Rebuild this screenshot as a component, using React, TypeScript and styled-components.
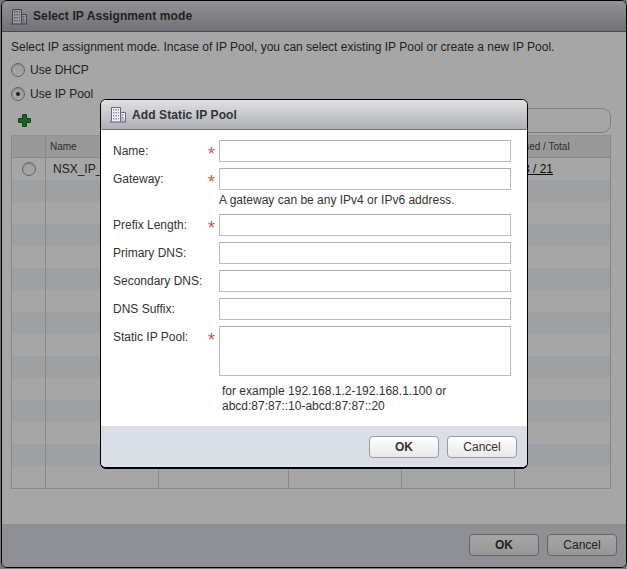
import React from 'react';
import styled, { createGlobalStyle } from 'styled-components';

const GlobalStyle = createGlobalStyle`
  html, body {
    margin: 0;
    padding: 0;
    background: #b9b9b9;
  }
  body {
    font-family: "Liberation Sans", Arial, sans-serif;
    font-size: 12px;
    color: #333;
  }
`;

const Page = styled.div`
  position: relative;
  width: 627px;
  height: 569px;
  overflow: hidden;
`;

const Dialog = styled.div`
  box-sizing: border-box;
  display: flex;
  flex-direction: column;
  width: 626px;
  height: 568px;
  margin-left: 1px;
  background: #fff;
  border: 1px solid #000;
  border-radius: 6px;
  overflow: hidden;
`;

const Header = styled.div<{ $h: number }>`
  box-sizing: border-box;
  flex: none;
  display: flex;
  align-items: center;
  gap: 5px;
  height: ${(p) => p.$h}px;
  padding-left: 8px;
  background: linear-gradient(#dfe1e5, #aeb0b4);
  border-bottom: 1px solid #6f6f6f;
  font-weight: bold;
  font-size: 12px;
  letter-spacing: 0.1px;
`;

const Body = styled.div`
  flex: 1;
  min-height: 0;
  padding: 8px 0 0 9px;
`;

const Intro = styled.div`
  height: 15px;
  line-height: 15px;
`;

const RadioRow = styled.label<{ $top: number }>`
  display: flex;
  align-items: center;
  gap: 5px;
  height: 14px;
  margin-top: ${(p) => p.$top}px;
  line-height: 14px;
`;

const Radio = styled.span`
  box-sizing: border-box;
  flex: none;
  display: flex;
  align-items: center;
  justify-content: center;
  width: 14px;
  height: 14px;
  border: 1px solid #9a9a9a;
  border-radius: 50%;
  background: linear-gradient(#f4f4f4, #fff);
  box-shadow: inset 0 1px 1px #ccc;
`;

const RadioDot = styled.span`
  width: 4px;
  height: 4px;
  border-radius: 50%;
  background: #333;
`;

const Toolbar = styled.div`
  display: flex;
  align-items: center;
  justify-content: space-between;
  width: 600px;
  height: 25px;
  margin-top: 7px;
  padding-left: 7px;
  box-sizing: border-box;
`;

const Search = styled.div`
  box-sizing: border-box;
  width: 320px;
  height: 25px;
  background: #fff;
  border: 1px solid #c2c2c2;
  border-radius: 9px;
`;

const Table = styled.div`
  box-sizing: border-box;
  width: 600px;
  margin-top: 2px;
  border: 1px solid #d2d2d2;
  border-top-color: #e0e0e0;
`;

const Row = styled.div<{ $kind: 'head' | 'plain' | 'stripe' }>`
  display: grid;
  grid-template-columns: 34px 113px 130px 113px 113px 1fr;
  height: ${(p) => (p.$kind === 'head' ? 21 : 22)}px;
  background: ${(p) =>
    p.$kind === 'head' ? '#ececec' : p.$kind === 'stripe' ? '#f3f8fb' : '#fff'};
  border-bottom: ${(p) => (p.$kind === 'head' ? '1px solid #d2d2d2' : 'none')};
`;

const HeadCell = styled.div`
  padding-left: 4px;
  border-right: 1px solid #d2d2d2;
  font-size: 10px;
  line-height: 21px;
  color: #444;
  white-space: nowrap;
  &:last-child {
    padding-left: 2px;
    border-right: none;
  }
`;

const Cell = styled.div`
  display: flex;
  align-items: center;
  padding-left: 7px;
  border-right: 1px solid #d2d2d2;
  white-space: nowrap;
  overflow: hidden;
  &:last-child {
    padding-left: 8px;
    border-right: none;
  }
`;

const RadioCell = styled(Cell)`
  padding-left: 10px;
`;

const LinkText = styled.span`
  color: #111;
  text-decoration: underline;
`;

const Footer = styled.div<{ $h: number; $right: number }>`
  box-sizing: border-box;
  flex: none;
  display: flex;
  justify-content: flex-end;
  gap: 8px;
  height: ${(p) => p.$h}px;
  padding: 10px ${(p) => p.$right}px 0 0;
  background: #dadee5;
`;

const Button = styled.button<{ $primary?: boolean }>`
  box-sizing: border-box;
  width: 70px;
  height: 22px;
  padding: 0;
  background: linear-gradient(#fff, #e8e8e8);
  border: 1px solid #9c9c9c;
  border-radius: 4px;
  font-family: inherit;
  font-size: 12px;
  font-weight: ${(p) => (p.$primary ? 'bold' : 'normal')};
  color: #333;
`;

const Overlay = styled.div`
  position: absolute;
  inset: 0;
  background: rgba(0, 0, 0, 0.35);
`;

const Modal = styled.div`
  position: absolute;
  left: 100px;
  top: 99px;
  box-sizing: border-box;
  display: flex;
  flex-direction: column;
  width: 428px;
  height: 370px;
  background: #fff;
  border: 2px solid #000;
  border-width: 1px 1px 2px 1px;
  border-radius: 6px;
  overflow: hidden;
`;

const Form = styled.div`
  flex: 1;
  display: grid;
  grid-template-columns: 95px 11px 292px;
  grid-auto-rows: min-content;
  row-gap: 6px;
  align-content: start;
  padding: 10px 0 0 12px;
`;

const Label = styled.div`
  height: 22px;
  line-height: 22px;
`;

const Star = styled.div`
  height: 22px;
  font-size: 18px;
  line-height: 29px;
  color: #d9534b;
`;

const Input = styled.input`
  box-sizing: border-box;
  display: block;
  width: 292px;
  height: 22px;
  margin: 0;
  background: #fff;
  border: 1px solid #bdbdbd;
  border-top-color: #b0b0b0;
  outline: none;
`;

const Area = styled.textarea`
  box-sizing: border-box;
  display: block;
  width: 292px;
  height: 50px;
  margin: 0;
  background: #fff;
  border: 1px solid #bdbdbd;
  border-top-color: #b0b0b0;
  outline: none;
  resize: none;
`;

const Hint = styled.div`
  grid-column: 3;
  height: 15px;
  margin: -3px 0 0;
  line-height: 15px;
`;

const Example = styled.div`
  grid-column: 3;
  margin-top: 2px;
  padding-left: 3px;
  line-height: 15px;
`;

const BuildingIcon = () => (
  <svg width="18" height="17" viewBox="0 0 18 17" fill="none">
    <path d="M2.5 15.5V1.5h9v14M11.5 6.5h5v9" fill="#f2f2f6" />
    <path
      d="M4 3h1.5v1.5H4zM6.5 3H8v1.5H6.5zM9 3h1v1.5H9zM4 6h1.5v1.5H4zM6.5 6H8v1.5H6.5zM9 6h1v1.5H9zM4 9h1.5v1.5H4zM6.5 9H8v1.5H6.5zM9 9h1v1.5H9zM4 12h1.5v1.5H4zM6.5 12H8v1.5H6.5zM9 12h1v1.5H9zM13 8h1.5v1.5H13zM13 11h1.5v1.5H13z"
      fill="#8a8aa6"
    />
    <path
      d="M2.5 15.5V1.5h9v14M11.5 6.5h5v9M.5 16h17"
      stroke="#66668a"
      strokeWidth="1"
    />
  </svg>
);

const PlusIcon = () => (
  <svg width="13" height="13" viewBox="0 0 13 13">
    <path
      d="M4.5 1a.5.5 0 0 1 .5-.5h3a.5.5 0 0 1 .5.5v3.5H12a.5.5 0 0 1 .5.5v3a.5.5 0 0 1-.5.5H8.500V12a.5.5 0 0 1-.5.5H5a.5.5 0 0 1-.5-.5V8.500H1a.5.5 0 0 1-.5-.5V5a.5.5 0 0 1 .5-.5h3.500z"
      fill="#2c9a38"
      stroke="#13661d"
    />
  </svg>
);

const ROWS = Array.from({ length: 14 }, (_, i) => i);

const App = () => (
  <Page>
    <GlobalStyle />
    <Dialog>
      <Header $h={31}>
        <BuildingIcon />
        Select IP Assignment mode
      </Header>
      <Body>
        <Intro>
          Select IP assignment mode. Incase of IP Pool, you can select existing
          IP Pool or create a new IP Pool.
        </Intro>
        <RadioRow $top={8}>
          <Radio />
          Use DHCP
        </RadioRow>
        <RadioRow $top={10}>
          <Radio>
            <RadioDot />
          </Radio>
          Use IP Pool
        </RadioRow>
        <Toolbar>
          <PlusIcon />
          <Search />
        </Toolbar>
        <Table>
          <Row $kind="head">
            <HeadCell />
            <HeadCell>Name</HeadCell>
            <HeadCell />
            <HeadCell />
            <HeadCell />
            <HeadCell>Used / Total</HeadCell>
          </Row>
          <Row $kind="plain">
            <RadioCell>
              <Radio />
            </RadioCell>
            <Cell>NSX_IP_Pool</Cell>
            <Cell />
            <Cell />
            <Cell />
            <Cell>
              <LinkText>3 / 21</LinkText>
            </Cell>
          </Row>
          {ROWS.map((i) => (
            <Row key={i} $kind={i % 2 === 0 ? 'stripe' : 'plain'}>
              <Cell />
              <Cell />
              <Cell />
              <Cell />
              <Cell />
              <Cell />
            </Row>
          ))}
        </Table>
      </Body>
      <Footer $h={43} $right={9}>
        <Button $primary>OK</Button>
        <Button>Cancel</Button>
      </Footer>
    </Dialog>
    <Overlay />
    <Modal>
      <Header $h={30}>
        <BuildingIcon />
        Add Static IP Pool
      </Header>
      <Form>
        <Label>Name:</Label>
        <Star>*</Star>
        <Input />
        <Label>Gateway:</Label>
        <Star>*</Star>
        <Input />
        <Hint>A gateway can be any IPv4 or IPv6 address.</Hint>
        <Label>Prefix Length:</Label>
        <Star>*</Star>
        <Input />
        <Label>Primary DNS:</Label>
        <div />
        <Input />
        <Label>Secondary DNS:</Label>
        <div />
        <Input />
        <Label>DNS Suffix:</Label>
        <div />
        <Input />
        <Label>Static IP Pool:</Label>
        <Star>*</Star>
        <Area />
        <Example>
          for example 192.168.1.2-192.168.1.100 or
          <br />
          abcd:87:87::10-abcd:87:87::20
        </Example>
      </Form>
      <Footer $h={41} $right={10}>
        <Button $primary>OK</Button>
        <Button>Cancel</Button>
      </Footer>
    </Modal>
  </Page>
);

export default App;
